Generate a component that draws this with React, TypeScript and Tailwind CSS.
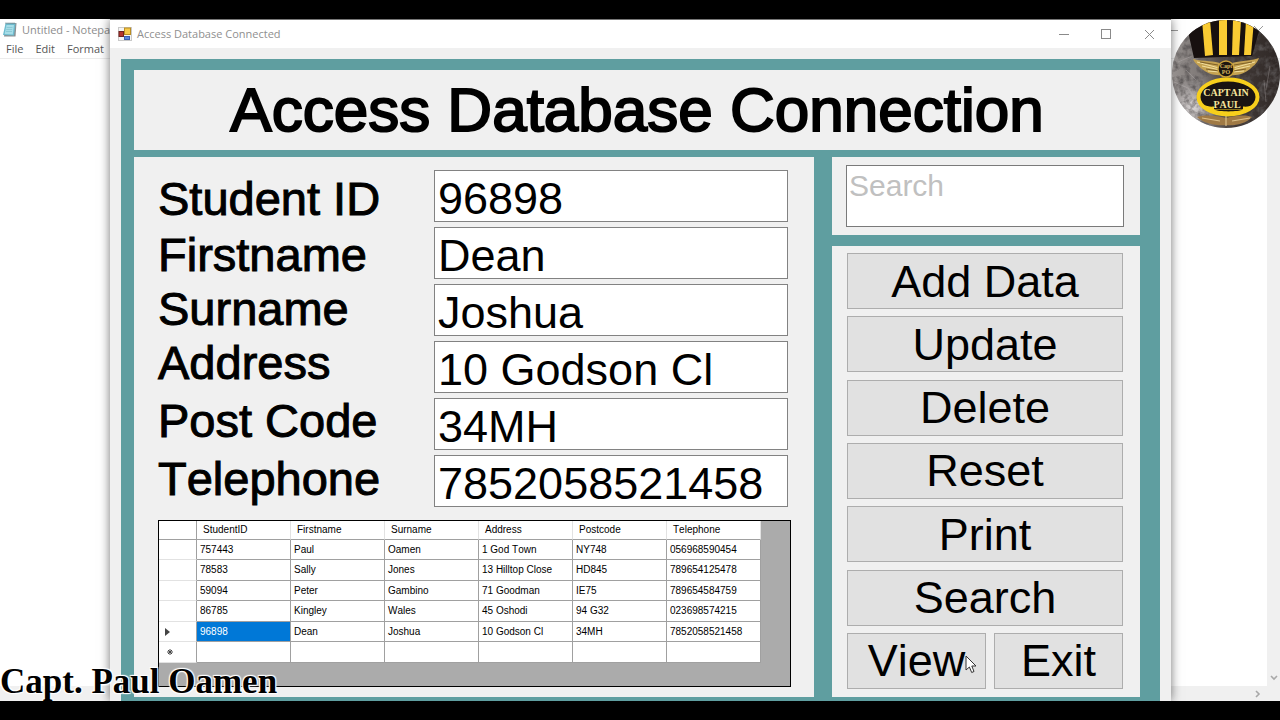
import React from "react";

interface Field {
  id: string;
  label: string;
  value: string;
}

const fields: Field[] = [
  { id: "student-id", label: "Student ID", value: "96898" },
  { id: "firstname", label: "Firstname", value: "Dean" },
  { id: "surname", label: "Surname", value: "Joshua" },
  { id: "address", label: "Address", value: "10 Godson Cl" },
  { id: "post-code", label: "Post Code", value: "34MH" },
  { id: "telephone", label: "Telephone", value: "7852058521458" },
];

const columns = ["StudentID", "Firstname", "Surname", "Address", "Postcode", "Telephone"];

const students = [
  ["757443", "Paul", "Oamen", "1 God Town", "NY748", "056968590454"],
  ["78583", "Sally", "Jones", "13 Hilltop Close", "HD845", "789654125478"],
  ["59094", "Peter", "Gambino", "71 Goodman", "IE75", "789654584759"],
  ["86785", "Kingley", "Wales", "45 Oshodi", "94 G32", "023698574215"],
  ["96898", "Dean", "Joshua", "10 Godson Cl", "34MH", "7852058521458"],
  ["", "", "", "", "", ""],
];

const selectedRow = 4;
const actions = ["Add Data", "Update", "Delete", "Reset", "Print", "Search"];

const NotepadIcon = () => (
  <svg className="h-4 w-4" viewBox="0 0 16 16" fill="none">
    <path d="M4 1.5 14.5 1 13.5 14.5 2 14.500Z" fill="#8b8f92" />
    <path d="M3.5 1.5 13.5 1.5 12 13.5 1 13Z" fill="#6dbccf" />
    <path d="M4.5 3 12 3 10.8 12.5 2.6 12Z" fill="#a6dde8" />
    <path d="M4.5 5.5h6M4.2 7.5h6M4 9.5h6" stroke="#7fc0cf" strokeWidth="0.7" />
    <path d="M4 0.500v1.6M6 0.500v1.6M8 0.500v1.6M10 0.500v1.6M12 0.500v1.6" stroke="#5e7f88" strokeWidth="0.9" />
  </svg>
);

const FormIcon = () => (
  <svg className="h-[14px] w-[14px]" viewBox="0 0 14 14">
    <rect x="0.5" y="0.5" width="13" height="13" fill="#f4f4f4" stroke="#c9c9c9" />
    <rect x="6.5" y="1" width="6" height="6.5" fill="#f7c948" stroke="#b98d23" />
    <rect x="1" y="4.5" width="4.5" height="5" fill="#b5342d" stroke="#6f2320" />
    <rect x="6.5" y="9.5" width="5" height="3" fill="#5a86dc" stroke="#3c5fb0" />
  </svg>
);

const Badge = () => (
  <svg className="h-[108px] w-[108px]" viewBox="0 0 108 108" role="img" aria-label="Captain Paul">
    <defs>
      <clipPath id="badge-clip">
        <circle cx="54" cy="54" r="54" />
      </clipPath>
      <linearGradient id="leather" x1="0" y1="0.55" x2="1" y2="0.45">
        <stop offset="0" stopColor="#96918f" />
        <stop offset="0.28" stopColor="#7d7775" />
        <stop offset="0.5" stopColor="#453d3a" />
        <stop offset="1" stopColor="#2f2826" />
      </linearGradient>
      <radialGradient id="shine" cx="0.2" cy="0.8" r="0.3">
        <stop offset="0" stopColor="#f2eeee" stopOpacity="0.85" />
        <stop offset="1" stopColor="#8d898c" stopOpacity="0" />
      </radialGradient>
      <filter id="grain" x="0" y="0" width="1" height="1">
        <feTurbulence type="fractalNoise" baseFrequency="0.16" numOctaves="3" seed="4" />
        <feColorMatrix values="0 0 0 0 0.1  0 0 0 0 0.09  0 0 0 0 0.09  2.2 0 0 0 -0.9" />
      </filter>
    </defs>
    <g clipPath="url(#badge-clip)">
      <rect width="108" height="108" fill="url(#leather)" />
      <rect width="108" height="108" fill="url(#shine)" />
      <rect width="108" height="108" filter="url(#grain)" />
      <path d="M2 62l14 6 8 12M8 78l12 2 10 14M14 50l10 10M6 42l14-6M92 60l2 22M98 46l-4 24" stroke="#c4bebe" strokeOpacity="0.3" fill="none" />
      <path d="M14 0H90L80 36 22 38 17 16Z" fill="#17100f" />
      <path d="M30 0H38L41 35 33 36Z" fill="#f9cb33" />
      <path d="M47 0H55L55 35 47 35Z" fill="#f9cb33" />
      <path d="M61 0H69L67 35 60 35Z" fill="#f9cb33" />
      <path d="M74 0H82L79 35 72 35Z" fill="#f9cb33" />
      <path d="M21 39C32 42 42 40 50 44L50 55C42 56 35 53 30 49 27 46 23 44 21 39Z" fill="#c5a251" />
      <path d="M87 38C76 42 66 40 58 44L58 55C66 56 73 53 78 49 81 46 85 44 87 38Z" fill="#c5a251" />
      <path d="M25 42l22 6M30 46l18 4M36 51l12 1M83 42l-22 6M78 46l-18 4M72 51l-12 1" stroke="#f1dfa0" />
      <path d="M28 42l18 3M34 49l13 2M80 42l-18 3M74 49l-13 2" stroke="#6b4f1d" strokeWidth="0.8" />
      <circle cx="54" cy="49" r="8" fill="#1c1610" stroke="#c9a13a" strokeWidth="1.4" />
      <text x="54" y="48" textAnchor="middle" fontSize="6" fontWeight="700" fill="#d8b75e" fontFamily="Liberation Serif, serif">Capt</text>
      <text x="54" y="54" textAnchor="middle" fontSize="6" fontWeight="700" fill="#d8b75e" fontFamily="Liberation Serif, serif">PO</text>
      <path d="M25 97C34 94 46 96 54 98 62 96 72 94 80 97 74 104 62 106 54 105 46 106 32 104 25 97Z" fill="#a07a45" />
      <path d="M30 98l18 3M78 98l-18 3M54 96v10" stroke="#dcc08a" strokeWidth="1.2" />
      <ellipse cx="56" cy="77" rx="29.5" ry="17.5" fill="#1a1412" stroke="#f7cf1c" strokeWidth="4" />
      <path d="M31 85C35 86 38 87 42 86.500V89H71V86.500C75 87 79 86 82 85 75 92 67 95 56 95 45 95 37 92 31 85Z" fill="#f7cf1c" />
      <path d="M42 89.500H71C66 92 47 92 42 89.500Z" fill="#1a1412" />
      <text x="54" y="76" textAnchor="middle" fontSize="10" fontWeight="700" fill="#f5e49a" fontFamily="Liberation Serif, serif">CAPTAIN</text>
      <text x="55" y="88" textAnchor="middle" fontSize="10" fontWeight="700" fill="#f5e49a" fontFamily="Liberation Serif, serif">PAUL</text>
    </g>
  </svg>
);

const Notepad = () => (
  <section className="absolute inset-0 flex flex-col bg-white font-['Open_Sans',sans-serif] text-[11px]">
    <header className="flex h-[22px] items-center justify-between pl-0.5 pr-4 text-[#8c8c8c]">
      <div className="flex items-center gap-1">
        <NotepadIcon />
        <span className="whitespace-nowrap">Untitled - Notepad</span>
      </div>
      <svg className="h-[11px] w-[101px]" viewBox="0 0 101 11" fill="none" stroke="#9a9a9a">
        <path d="M1 5.5h14M91 1l9 9M100 1l-9 9" />
      </svg>
    </header>
    <nav className="flex h-[18px] shrink-0 items-center gap-3 border-b border-[#ececec] pl-1.5 text-[#555]">
      <button type="button">File</button>
      <button type="button">Edit</button>
      <button type="button">Format</button>
    </nav>
    <div className="flex flex-1">
      <div className="flex-1" />
      <div className="flex w-[13px] items-end justify-center bg-[#f0f0f0] pb-1">
        <svg className="h-2 w-2" viewBox="0 0 8 8" fill="none" stroke="#a8a8a8" strokeWidth="1.6">
          <path d="M1 2l3 3 3-3" />
        </svg>
      </div>
    </div>
    <div className="flex h-[15px] items-center justify-end bg-[#f0f0f0] pr-[18px]">
      <svg className="h-2 w-2" viewBox="0 0 8 8" fill="none" stroke="#a8a8a8" strokeWidth="1.6">
        <path d="M2 1l3 3-3 3" />
      </svg>
    </div>
  </section>
);

const TitleBar = () => (
  <header className="flex h-[29px] shrink-0 items-center justify-between border-t border-[#777] bg-white pl-2 pr-4">
    <div className="flex items-center gap-[5px]">
      <FormIcon />
      <span className="font-['Open_Sans',sans-serif] text-[11px] text-[#8f8f8f]">Access Database Connected</span>
    </div>
    <div className="flex gap-8">
      <button type="button" aria-label="Minimize">
        <svg className="h-[11px] w-[11px]" viewBox="0 0 11 11" stroke="#8a8a8a">
          <path d="M1 5.5h10" />
        </svg>
      </button>
      <button type="button" aria-label="Maximize">
        <svg className="h-[11px] w-[11px]" viewBox="0 0 11 11" fill="none" stroke="#8a8a8a">
          <rect x="0.5" y="0.5" width="9" height="9" />
        </svg>
      </button>
      <button type="button" aria-label="Close">
        <svg className="h-[11px] w-[11px]" viewBox="0 0 11 11" stroke="#8a8a8a">
          <path d="M1 1l9 9M10 1l-9 9" />
        </svg>
      </button>
    </div>
  </header>
);

const StudentForm = () => (
  <form className="flex">
    <div className="grid w-[276px] shrink-0 auto-rows-[58px] grid-rows-[56px_54px_54px_58px]">
      {fields.map((field) => (
        <label
          key={field.id}
          htmlFor={field.id}
          className="whitespace-nowrap text-[47px] leading-[58px] [-webkit-text-stroke:1px_black]"
        >
          {field.label}
        </label>
      ))}
    </div>
    <div className="mr-0.5 flex min-w-0 flex-1 flex-col gap-[5px]">
      {fields.map((field) => (
        <input
          key={field.id}
          id={field.id}
          type="text"
          defaultValue={field.value}
          className="h-[52px] w-full border border-[#828282] bg-white px-[3px] pt-1.5 text-[45px] leading-none outline-none"
        />
      ))}
    </div>
  </form>
);

const StudentGrid = () => (
  <div className="-mr-px mt-3 h-[167px] border border-black bg-[#ababab]">
    <table className="w-[602px] table-fixed border-separate border-spacing-0 bg-white text-left text-[10px] leading-3">
      <thead>
        <tr className="h-[19px]">
          <th className="w-[38px] border-b border-r border-[#a0a0a0]" />
          {columns.map((column) => (
            <th key={column} className="border-b border-r border-b-[#a0a0a0] border-r-[#e2e2e2] pl-1.5 font-normal">
              {column}
            </th>
          ))}
        </tr>
      </thead>
      <tbody>
        {students.map((student, row) => (
          <tr key={row} className="h-5 even:h-[21px]">
            <th className="border-b border-r border-b-[#e2e2e2] border-r-[#a0a0a0] pl-1.5">
              {row === selectedRow && (
                <svg className="h-2 w-[5px]" viewBox="0 0 5 8">
                  <path d="M0 0l5 4-5 4z" fill="#444" />
                </svg>
              )}
              {row === students.length - 1 && (
                <svg className="ml-0.5 h-[6px] w-[6px]" viewBox="0 0 6 6" stroke="#444">
                  <path d="M3 0v6M0 3h6M1 1l4 4M5 1L1 5" />
                </svg>
              )}
            </th>
            {student.map((cell, i) => (
              <td
                key={columns[i]}
                className={
                  row === selectedRow && i === 0
                    ? "whitespace-nowrap border-b border-r border-[#a0a0a0] bg-[#0078d7] pl-[3px] text-white"
                    : "whitespace-nowrap border-b border-r border-[#a0a0a0] pl-[3px]"
                }
              >
                {cell}
              </td>
            ))}
          </tr>
        ))}
      </tbody>
    </table>
  </div>
);

const buttonStyle = "h-14 border border-[#adadad] bg-[#e1e1e1] text-center text-[45px] leading-none";

const Sidebar = () => (
  <aside className="flex w-[308px] shrink-0 flex-col gap-[11px]">
    <div className="bg-[#f0f0f0] px-[14px] py-2">
      <textarea
        aria-label="Search"
        placeholder="Search"
        className="block h-[62px] w-[278px] resize-none border border-[#7a7a7a] bg-white px-0.5 py-1 text-[30px] leading-8 outline-none placeholder:text-[#c0c0c0]"
      />
    </div>
    <div className="flex flex-1 flex-col justify-between bg-[#f0f0f0] pb-2 pl-[15px] pr-[17px] pt-[7px]">
      {actions.map((action) => (
        <button key={action} type="button" className={buttonStyle}>
          {action}
        </button>
      ))}
      <div className="flex gap-2">
        <button type="button" className={`${buttonStyle} relative w-[139px]`}>
          View
          <svg className="absolute right-2 top-[21px] h-[19px] w-3" viewBox="0 0 12 19">
            <path d="M1 1v14l3.4-3 2.3 5.500 2.3-1L6.800 11H11z" fill="#fff" stroke="#333" />
          </svg>
        </button>
        <button type="button" className={`${buttonStyle} flex-1`}>
          Exit
        </button>
      </div>
    </div>
  </aside>
);

const App: React.FC = () => {
  return (
    <div className="flex min-h-screen flex-col bg-black py-[19px] font-['Liberation_Sans',Arial,sans-serif] text-black [font-kerning:none]">
      <div className="relative flex flex-1 flex-col overflow-hidden">
        <Notepad />
        <main className="relative ml-[110px] mr-[109px] flex flex-1 flex-col bg-[#f0f0f0] shadow-[0_0_10px_rgba(0,0,0,0.55)]">
          <TitleBar />
          <div className="flex flex-1 flex-col bg-[#f0f0f0] px-[11px] pt-[11px]">
            <div className="flex flex-1 flex-col gap-[7px] bg-[#5f9ea0] pb-1 pl-[13px] pr-5 pt-[11px]">
              <h1 className="bg-[#f0f0f0] text-center text-[62px] leading-[80px] [-webkit-text-stroke:2px_black]">
                Access Database Connection
              </h1>
              <div className="flex flex-1 gap-[18px]">
                <section className="min-w-0 flex-1 bg-[#f0f0f0] px-6 pt-[13px]">
                  <StudentForm />
                  <StudentGrid />
                </section>
                <Sidebar />
              </div>
            </div>
          </div>
        </main>
        <div className="absolute right-0 top-px">
          <Badge />
        </div>
        <p className="absolute bottom-0 left-0 font-['Liberation_Serif',serif] text-[35px] font-bold leading-[38px] [text-shadow:1px_1px_1px_white,-1px_-1px_1px_white,1px_-1px_1px_white,-1px_1px_1px_white]">
          Capt. Paul Oamen
        </p>
      </div>
    </div>
  );
};

export default App;
